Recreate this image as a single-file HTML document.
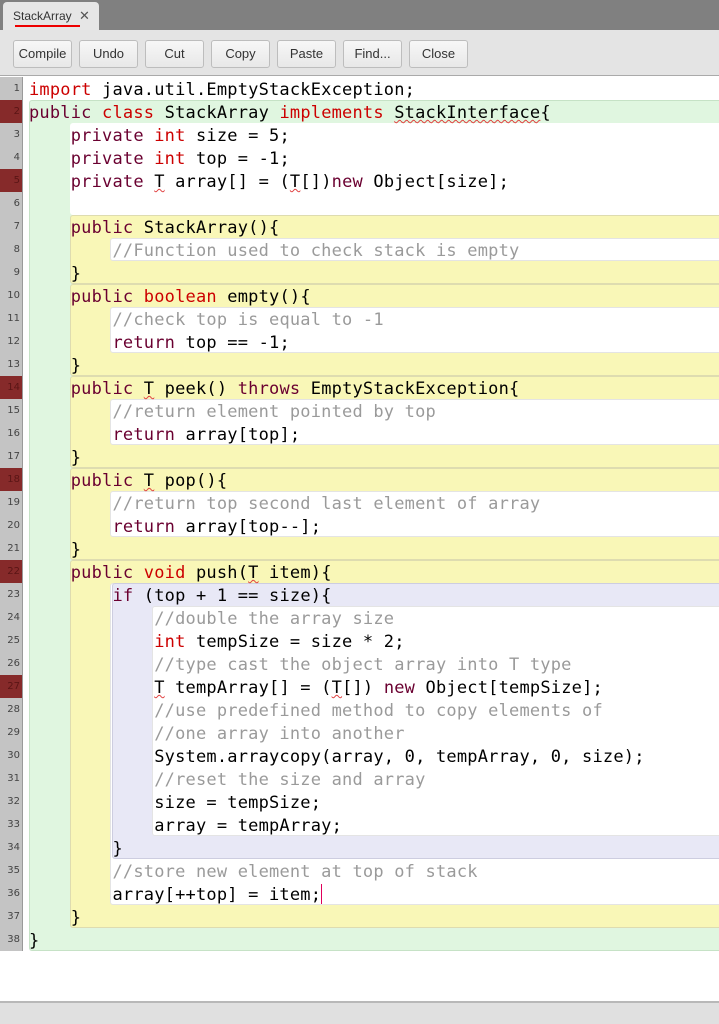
<!DOCTYPE html>
<html><head><meta charset="utf-8"><style>
*{margin:0;padding:0;box-sizing:border-box}
body{width:719px;height:1024px;background:#fff;position:relative;overflow:hidden;font-family:"Liberation Sans",sans-serif}
.topbar{position:absolute;left:0;top:0;width:719px;height:30px;background:#808080}
.tab{position:absolute;left:3px;top:2px;width:96px;height:28px;background:#e6e6e6;border-radius:4px 4px 0 0;font-size:12px;color:#333}
.tab span{position:absolute;left:10px;top:7px}
.tab .x{left:76px;top:6px;font-size:13px;color:#555}
.tab .ul{position:absolute;left:12px;top:23px;width:65px;height:2px;background:#e00}
.toolbar{position:absolute;left:0;top:30px;width:719px;height:46px;background:#e4e4e4;border-bottom:1px solid #aaa}
.btn{position:absolute;top:10px;width:59px;height:28px;border:1px solid #bdbdbd;border-radius:3px;background:linear-gradient(#f7f7f7,#e8e8e8);font-size:13px;color:#333;text-align:center;line-height:26px}
.gut{position:absolute;left:0;top:77px;width:23px;height:874px;background:#c4c4c4;border-right:1px solid #9a9a9a}
.gn{position:absolute;left:0;width:22px;height:23px;font-size:10px;color:#444;text-align:right;padding-right:2px;line-height:23px;font-family:"DejaVu Sans",sans-serif}
.gn.r{background:#862a2a;color:#5a1515}
.box{position:absolute;right:0}
.g{background:#e0f6e0;border:1px solid #c6e2c6;border-right:none;border-radius:3px 0 0 3px}
.y{background:#f9f7b7;border:1px solid #dedcb0;border-right:none;border-radius:3px 0 0 3px}
.w{background:#fff;border:1px solid #e4e4e4;border-right:none;border-radius:3px 0 0 3px}
.l{background:#e8e8f6;border:1px solid #cdcde0;border-right:none;border-radius:3px 0 0 3px}
.code{position:absolute;left:29px;top:79px;font-family:"DejaVu Sans Mono",monospace;font-size:17px;letter-spacing:0.2px;line-height:23px;white-space:pre;color:#000}
.k{color:#cc0000}.m{color:#6a0030}.c{color:#9a9a9a}
.sq{text-decoration:underline wavy #e04040;text-decoration-thickness:1px}
.cur{display:inline-block;width:1px;height:20px;background:#e0005a;vertical-align:-4px}
.bot{position:absolute;left:0;top:1001px;width:719px;height:23px;background:#e0e0e0;border-top:2px solid #b8b8b8}
</style></head><body>
<div class="topbar"></div>
<div class="tab"><span>StackArray</span><span class="x">✕</span><div class="ul"></div></div>
<div class="toolbar">
<div class="btn" style="left:13px">Compile</div>
<div class="btn" style="left:79px">Undo</div>
<div class="btn" style="left:145px">Cut</div>
<div class="btn" style="left:211px">Copy</div>
<div class="btn" style="left:277px">Paste</div>
<div class="btn" style="left:343px">Find...</div>
<div class="btn" style="left:409px">Close</div>
</div>
<div class="gut"></div>
<div id="g"></div>
<div class="box g" style="left:29px;top:100px;height:851px"></div>
<div class="box w" style="left:70px;top:123px;height:92px;border:none"></div>
<div class="box y" style="left:70px;top:215px;height:69px"></div>
<div class="box y" style="left:70px;top:284px;height:92px"></div>
<div class="box y" style="left:70px;top:376px;height:92px"></div>
<div class="box y" style="left:70px;top:468px;height:92px"></div>
<div class="box y" style="left:70px;top:560px;height:368px"></div>
<div class="box w" style="left:110px;top:238px;height:23px"></div>
<div class="box w" style="left:110px;top:307px;height:46px"></div>
<div class="box w" style="left:110px;top:399px;height:46px"></div>
<div class="box w" style="left:110px;top:491px;height:46px"></div>
<div class="box w" style="left:110px;top:583px;height:322px"></div>
<div class="box l" style="left:112px;top:583px;height:276px"></div>
<div class="box w" style="left:152px;top:606px;height:230px"></div>
<div class="code"><span class="k">import</span> java.util.EmptyStackException;
<span class="m">public</span> <span class="k">class</span> StackArray <span class="k">implements</span> <span class="sq">StackInterface</span>{
    <span class="m">private</span> <span class="k">int</span> size = 5;
    <span class="m">private</span> <span class="k">int</span> top = -1;
    <span class="m">private</span> <span class="sq">T</span> array[] = (<span class="sq">T</span>[])<span class="m">new</span> Object[size];

    <span class="m">public</span> StackArray(){
        <span class="c">//Function used to check stack is empty</span>
    }
    <span class="m">public</span> <span class="k">boolean</span> empty(){
        <span class="c">//check top is equal to -1</span>
        <span class="m">return</span> top == -1;
    }
    <span class="m">public</span> <span class="sq">T</span> peek() <span class="m">throws</span> EmptyStackException{
        <span class="c">//return element pointed by top</span>
        <span class="m">return</span> array[top];
    }
    <span class="m">public</span> <span class="sq">T</span> pop(){
        <span class="c">//return top second last element of array</span>
        <span class="m">return</span> array[top--];
    }
    <span class="m">public</span> <span class="k">void</span> push(<span class="sq">T</span> item){
        <span class="m">if</span> (top + 1 == size){
            <span class="c">//double the array size</span>
            <span class="k">int</span> tempSize = size * 2;
            <span class="c">//type cast the object array into T type</span>
            <span class="sq">T</span> tempArray[] = (<span class="sq">T</span>[]) <span class="m">new</span> Object[tempSize];
            <span class="c">//use predefined method to copy elements of</span>
            <span class="c">//one array into another</span>
            System.arraycopy(array, 0, tempArray, 0, size);
            <span class="c">//reset the size and array</span>
            size = tempSize;
            array = tempArray;
        }
        <span class="c">//store new element at top of stack</span>
        array[++top] = item;<span class="cur"></span>
    }
}</div>
<div class="bot"></div>
<script>
var red=[2,5,14,18,22,27],h='';
for(var i=1;i<=38;i++){h+='<div class="gn'+(red.indexOf(i)>=0?' r':'')+'" style="top:'+(77+(i-1)*23)+'px">'+i+'</div>';}
document.getElementById('g').innerHTML=h;
</script>
</body></html>
